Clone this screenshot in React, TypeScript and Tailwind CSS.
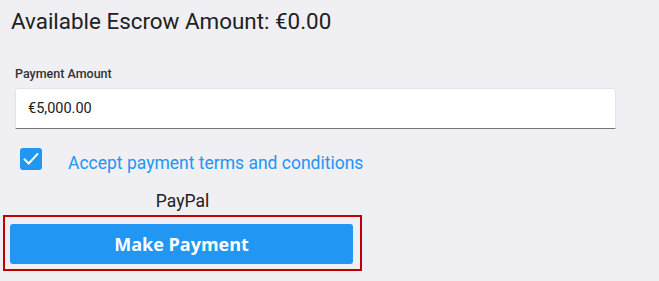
import React from "react";

const roboto = { fontFamily: "Roboto, 'Liberation Sans', sans-serif" };

const App = () => {
  return (
    <div className="w-full h-[281px] bg-[#f0eff4] overflow-hidden" style={roboto}>
      <h1 className="pt-2 pl-[11px] text-[22.4px] leading-[26px] font-normal text-[#212121]">
        Available Escrow Amount: €0.00
      </h1>

      <div className="mt-[33px] pl-[15px]">
        <label className="block text-[12.5px] leading-[14px] font-medium text-[#333]">
          Payment Amount
        </label>
        <div className="mt-[7px] w-[601px] h-[41px] bg-white rounded-t-[3px] border border-[#e4e4e8] border-b-[#757575] flex items-center pl-3 text-[14.5px] text-[#212121]">
          €5,000.00
        </div>
      </div>

      <div className="mt-[19px] ml-5 h-[22px] flex items-start">
        <div className="w-[22px] h-[22px] rounded-[3px] bg-[#2196f3] flex items-center justify-center">
          <svg width="18" height="18" viewBox="0 0 24 24" fill="none">
            <path d="M3.5 12.5l5.5 5.5L20.5 5.5" stroke="white" strokeWidth="2.6" strokeLinecap="square" />
          </svg>
        </div>
        <span className="ml-[26px] mt-1 text-[17.5px] leading-[22px] text-[#2196f3]">
          Accept payment terms and conditions
        </span>
      </div>

      <div className="ml-[3px] w-[359px]">
        <p className="mt-5 text-center text-[17.5px] leading-[22px] text-[#212121]">PayPal</p>
        <div className="mt-[3px] h-[56px] border-2 border-[#c00000] pl-[5px] pt-[7px]">
          <button
            className="w-[343px] h-10 rounded-[3px] bg-[#2196f3] text-white text-[18px] font-bold"
            style={{ fontFamily: "'Open Sans', 'Liberation Sans', sans-serif" }}
          >
            Make Payment
          </button>
        </div>
      </div>
    </div>
  );
};

export default App;
